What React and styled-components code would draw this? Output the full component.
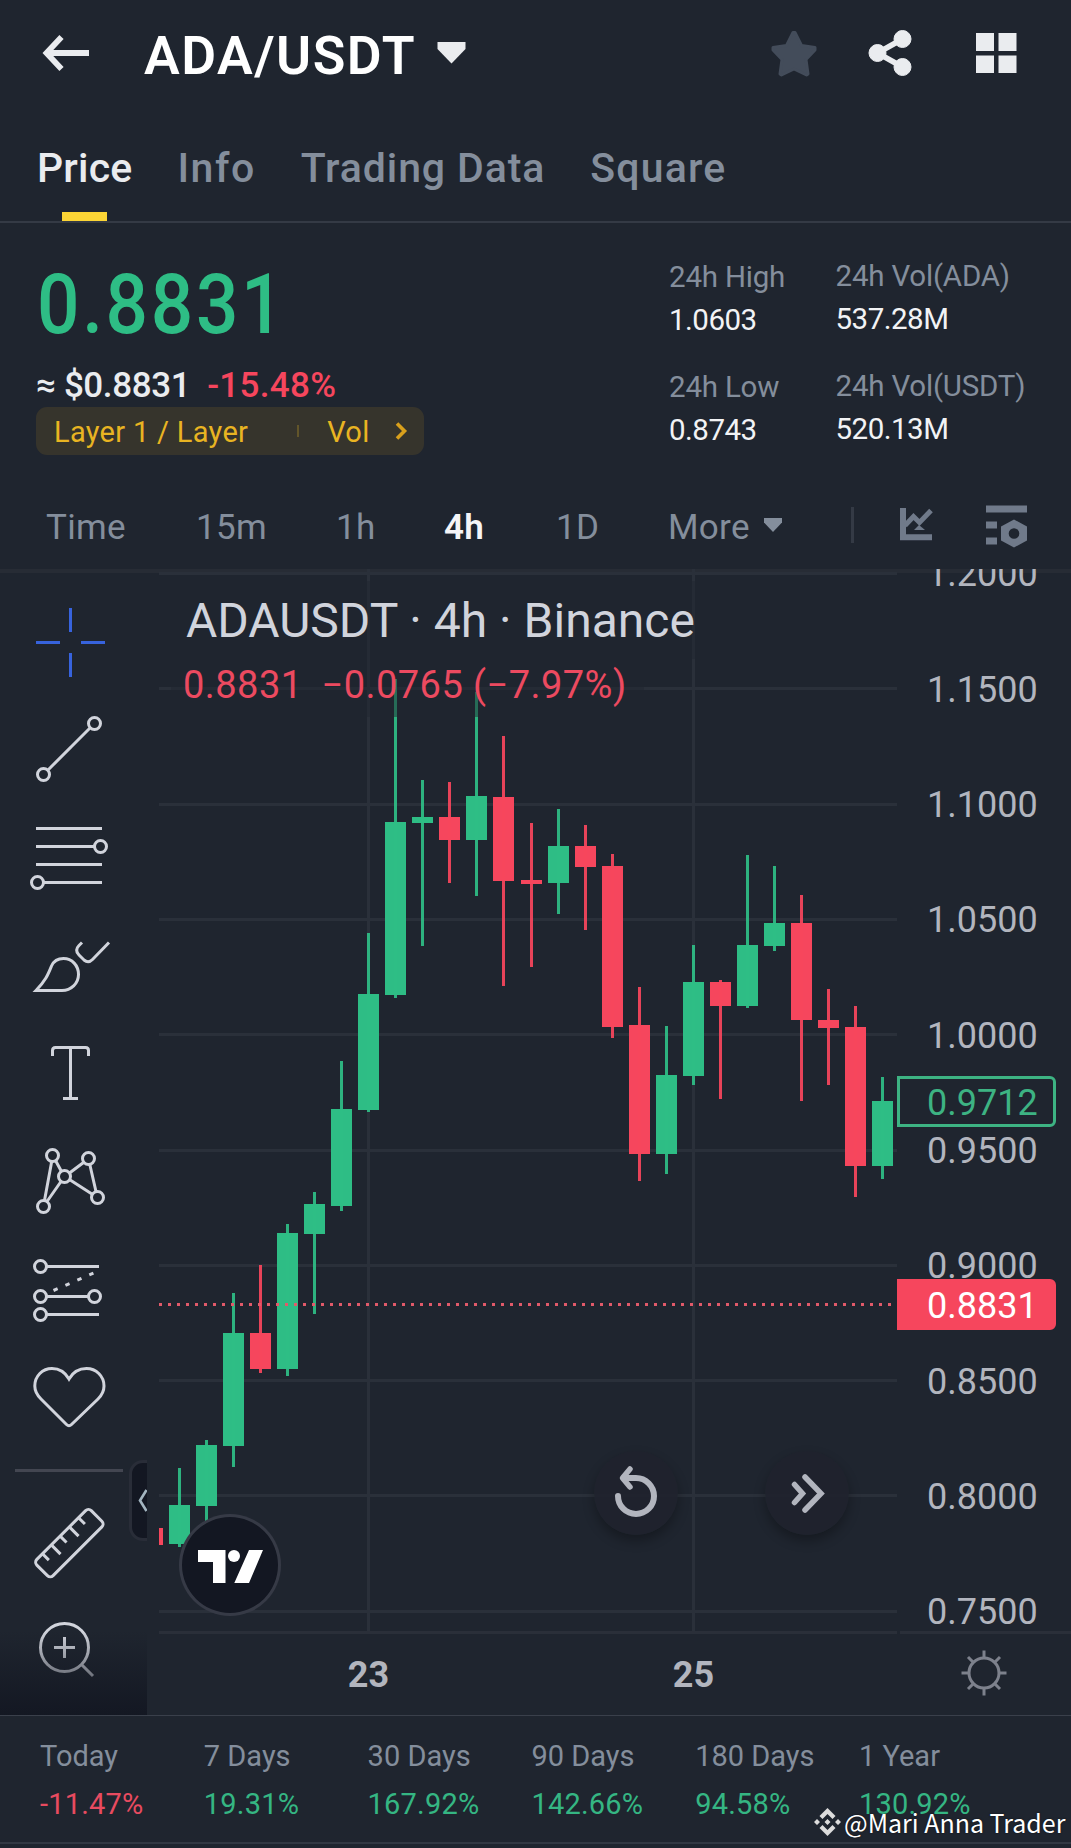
import React from 'react';
import styled, { createGlobalStyle } from 'styled-components';

const GlobalStyle = createGlobalStyle`
  * {
    box-sizing: border-box;
  }

  body {
    margin: 0;
    background: #1f252f;
    font-family: Roboto, "Liberation Sans", sans-serif;
  }

  svg {
    display: block;
    flex: none;
  }
`;

const UP = '#2ebd85';
const DOWN = '#f6465d';

const Screen = styled.div`
  position: relative;
  width: 1071px;
  height: 1848px;
  overflow: hidden;
  background: #1f252f;
  color: #eaecef;
`;

const Header = styled.header`
  display: flex;
  align-items: center;
  height: 110px;
  padding: 0 53px 4px 42px;
`;

const Pair = styled.h1`
  margin: 6px 0 0 54px;
  font-size: 53.5px;
  line-height: 64px;
  font-weight: 600;
  letter-spacing: 1.5px;
  color: #ffffff;
  white-space: nowrap;
`;

const PairCaret = styled.svg`
  margin: 0 auto 0 21px;
`;

const HeaderIcons = styled.div`
  display: flex;
  align-items: center;
  gap: 51px;
`;

const Tabs = styled.nav`
  display: flex;
  gap: 45px;
  height: 113px;
  padding-left: 37px;
  border-bottom: 2px solid #343a45;
`;

const Tab = styled.div`
  display: flex;
  flex-direction: column;
  align-items: center;
  padding-top: 35px;
  font-size: 41px;
  line-height: 47px;
  font-weight: 500;
  letter-spacing: ${(p) => p.$spacing}px;
  color: ${(p) => (p.$active ? '#eaecef' : '#848e9c')};

  &::after {
    content: '';
    width: 45px;
    height: 9px;
    margin: auto 0 0;
    background: ${(p) => (p.$active ? '#fcd535' : 'transparent')};
  }
`;

const Ticker = styled.section`
  display: flex;
  height: 261px;
`;

const PriceBlock = styled.div`
  width: 669px;
  padding: 32px 0 0 36px;
`;

const LastPrice = styled.div`
  width: max-content;
  margin-left: 1px;
  font-size: 83px;
  line-height: 100px;
  font-weight: 500;
  letter-spacing: 3px;
  color: ${UP};
  transform: scaleX(0.9);
  transform-origin: left;
`;

const FiatRow = styled.div`
  display: flex;
  gap: 17px;
  margin-top: 9px;
  font-size: 35px;
  line-height: 43px;
  font-weight: 500;
  letter-spacing: -0.4px;
`;

const Change = styled.span`
  color: ${DOWN};
  letter-spacing: 0.3px;
`;

const TagPill = styled.div`
  display: flex;
  align-items: center;
  width: 388px;
  height: 48px;
  padding-left: 18px;
  border-radius: 11px;
  background: #36342c;
  color: #e9b422;
  font-size: 29px;
  line-height: 36px;
  letter-spacing: 0.3px;

  span {
    padding-top: 2px;
  }
`;

const PillDivider = styled.i`
  width: 2px;
  height: 12px;
  margin: 0 28px 0 49px;
  background: #62552a;
`;

const StatColumn = styled.div`
  display: flex;
  flex-direction: column;
  gap: 27px;
  width: 166.5px;
  padding-top: ${(p) => p.$top}px;
  white-space: nowrap;
`;

const Stat = styled.div`
  display: flex;
  flex-direction: column;
  gap: 3px;
  font-size: 29.5px;
  line-height: 40px;
  letter-spacing: -0.2px;
`;

const StatLabel = styled.span`
  color: #848e9c;
`;

const StatValue = styled.span`
  color: #f2f3f5;
  letter-spacing: -0.5px;
`;

const Intervals = styled.div`
  display: flex;
  align-items: center;
  height: 85px;
  padding-left: 46px;
  font-size: 35px;
  color: #848e9c;
`;

const Interval = styled.span`
  width: ${(p) => p.$width}px;
  padding-top: 2px;
  font-weight: ${(p) => (p.$active ? 600 : 400)};
  letter-spacing: 0.3px;
  color: ${(p) => (p.$active ? '#f5f5f7' : '#848e9c')};
`;

const IntervalDivider = styled.i`
  width: 3px;
  height: 36px;
  margin: 0 46px 4px 69px;
  background: #343a45;
`;

const Workspace = styled.main`
  position: relative;
  display: flex;
  height: 1146px;
  background: linear-gradient(#272c35, #272c35) top / 100% 4px no-repeat;
`;

const Toolbar = styled.aside`
  position: relative;
  width: 147px;
  padding-top: 19px;
  overflow: hidden;

  &::after {
    content: '';
    position: absolute;
    left: 0;
    right: 0;
    bottom: 0;
    height: 84px;
    background: linear-gradient(rgba(19, 23, 34, 0), rgba(19, 23, 34, 0.95));
  }
`;

const ToolSvg = styled.svg`
  fill: none;
  stroke: ${(p) => p.$color || '#d1d4dc'};
  stroke-width: 3;
`;

const ToolDivider = styled.div`
  width: 108px;
  height: 3px;
  margin: 17px 0 18px 15px;
  background: #434651;
`;

const CollapseHandle = styled.div`
  position: absolute;
  top: 891px;
  right: -14px;
  width: 32px;
  height: 81px;
  padding: 26px 0 0 6px;
  border: 3px solid #292d38;
  border-radius: 14px;
  background: #131722;
`;

const ChartArea = styled.div`
  position: relative;
  flex: 1;
`;

const PlotRow = styled.div`
  display: flex;
  height: 1062px;
`;

const PriceAxis = styled.div`
  flex: 1;
  overflow: hidden;
  color: #b2b5be;
  font-size: 36px;
`;

const PriceLabel = styled.div`
  height: 115.35px;
  padding-left: 30px;
  line-height: 115.35px;

  &:first-child {
    margin-top: -51.7px;
  }
`;

const PriceTag = styled.div`
  position: absolute;
  left: 750px;
  top: ${(p) => p.$top}px;
  width: 159px;
  height: 51px;
  padding-left: 27px;
  border: 3px solid ${(p) => p.$border};
  border-radius: 0 6px 6px 0;
  background: ${(p) => p.$fill};
  color: ${(p) => p.$text};
  font-size: 36px;
  line-height: 48px;
`;

const LegendTitle = styled.div`
  position: absolute;
  left: 24px;
  top: 12px;
  height: 78px;
  padding: 0 8px 0 15px;
  background: rgba(31, 37, 47, 0.5);
  color: #d1d4dc;
  font-size: 48px;
  line-height: 80px;
  white-space: nowrap;
`;

const LegendValues = styled.div`
  position: absolute;
  left: 24px;
  top: 90px;
  display: flex;
  gap: 19px;
  height: 58px;
  padding: 0 17px 0 12px;
  background: rgba(31, 37, 47, 0.5);
  color: #ec4a60;
  font-size: 38px;
  line-height: 52px;
  letter-spacing: 0.45px;
  white-space: nowrap;
`;

const RoundButton = styled.button`
  position: absolute;
  left: ${(p) => p.$left}px;
  top: 882px;
  width: 84px;
  height: 84px;
  padding: 0;
  border: 0;
  border-radius: 50%;
  background: rgba(31, 34, 45, 0.93);
  box-shadow: 0 6px 12px rgba(0, 0, 0, 0.3);
`;

const TradingViewBadge = styled.div`
  position: absolute;
  left: 32px;
  top: 945px;
  width: 102px;
  height: 102px;
  border: 3px solid rgba(70, 74, 85, 0.7);
  border-radius: 50%;
  background: #131722;
`;

const TimeRow = styled.div`
  display: flex;
  gap: 3px;
  height: 84px;
  padding-left: 12px;
`;

const TimeAxis = styled.div`
  display: flex;
  width: 738px;
  padding-left: 47px;
  border-top: 3px solid #2a2f39;
`;

const TimeLabel = styled.span`
  width: 325px;
  text-align: center;
  font-size: 36px;
  line-height: 83px;
  font-weight: 700;
  color: #b2b5be;
`;

const AxisCorner = styled.div`
  flex: 1;
  padding: 16px 0 0 61px;
  border-top: 3px solid #2a2f39;
`;

const Periods = styled.section`
  display: grid;
  grid-template-columns: repeat(6, 163.8px);
  height: 129px;
  padding: 20px 0 0 40px;
  border-top: 1px solid #3a404b;
  border-bottom: 2px solid #323843;
  font-size: 29px;
  line-height: 40px;
  white-space: nowrap;
`;

const PeriodName = styled.div`
  color: #848e9c;
`;

const PeriodChange = styled.div`
  margin-top: 8px;
  letter-spacing: 0.2px;
  color: ${(p) => (p.$down ? '#e84b60' : '#35b683')};
`;

const Watermark = styled.div`
  position: absolute;
  left: 814px;
  bottom: 6px;
  display: flex;
  align-items: center;
  gap: 3px;
  color: #ffffff;
  font-family: "Noto Sans CJK SC", sans-serif;
  font-size: 25px;
  line-height: 40px;
  white-space: nowrap;
  text-shadow: 0 0 2px rgba(0, 0, 0, 0.6);
`;

const GRID_Y = [573, 688, 804, 919, 1034, 1150, 1265, 1380, 1495, 1611];
const PRICES = ['1.2000', '1.1500', '1.1000', '1.0500', '1.0000', '0.9500', '0.9000', '0.8500', '0.8000', '0.7500'];

// [left, body top, body bottom, wick top, wick bottom, rising]
const CANDLES = [
    [169, 1505, 1544, 1468, 1547, 1],
    [196, 1445, 1506, 1440, 1523, 1],
    [223, 1333, 1446, 1293, 1467, 1],
    [250, 1333, 1369, 1265, 1373, 0],
    [277, 1233, 1369, 1224, 1376, 1],
    [304, 1204, 1234, 1192, 1314, 1],
    [331, 1109, 1206, 1061, 1211, 1],
    [358, 994, 1110, 933, 1112, 1],
    [385, 822, 995, 679, 998, 1],
    [412, 817, 823, 780, 946, 1],
    [439, 817, 840, 782, 883, 0],
    [466, 796, 840, 692, 896, 1],
    [493, 797, 881, 736, 986, 0],
    [521, 880, 884, 823, 967, 0],
    [548, 846, 883, 809, 914, 1],
    [575, 846, 867, 825, 930, 0],
    [602, 866, 1027, 854, 1038, 0],
    [629, 1025, 1154, 987, 1181, 0],
    [656, 1075, 1154, 1026, 1174, 1],
    [683, 982, 1076, 945, 1085, 1],
    [710, 982, 1006, 980, 1099, 0],
    [737, 945, 1006, 855, 1008, 1],
    [764, 923, 946, 866, 951, 1],
    [791, 923, 1020, 895, 1101, 0],
    [818, 1020, 1028, 989, 1085, 0],
    [845, 1027, 1166, 1006, 1197, 0],
    [872, 1101, 1166, 1077, 1179, 1],
];

const PERIODS = [
    ['Today', '-11.47%'],
    ['7 Days', '19.31%'],
    ['30 Days', '167.92%'],
    ['90 Days', '142.66%'],
    ['180 Days', '94.58%'],
    ['1 Year', '130.92%'],
];

const Tool = ({ color, children }) => (
    <ToolSvg width="147" height="108" viewBox="0 0 147 108" $color={color}>{children}</ToolSvg>
);

const DrawingTools = () => (
    <Toolbar>
        <Tool color="#3763dd">
            <path d="M70.5 20v24M70.5 65v24M36 54.5h24M81 54.5h24" />
        </Tool>
        <Tool>
            <circle cx="43.5" cy="78.5" r="6" />
            <circle cx="94.5" cy="27.5" r="6" />
            <path d="M48 74L90 32" />
        </Tool>
        <Tool>
            <path d="M36 24.5h66M36 42.5h58M36 60.5h66M44 78.5h58" />
            <circle cx="100.5" cy="42.5" r="6" />
            <circle cx="37.5" cy="78.5" r="6" />
        </Tool>
        <Tool>
            <path d="M36 78.5H62C71 78.5 78.5 71.5 78.5 62.5C78.5 53.5 72 46.5 63.5 46.5C57.5 46.5 53.5 49.5 51.5 54C48 62.5 46 68 36 78.5Z" />
            <path d="M82 30.5L79 33.5C76 36.5 76 40 79 43L84 48C87 50.5 89.5 50.5 92.5 47.5L109 30.5" />
        </Tool>
        <Tool>
            <path d="M52.5 36V30.5Q52.5 27.5 55.5 27.5H85.5Q88.5 27.5 88.5 30.5V36M70.5 27.5V78.5M63 78.5H78" />
        </Tool>
        <Tool>
            <circle cx="52.5" cy="27.5" r="6" />
            <circle cx="88.5" cy="30.5" r="6" />
            <circle cx="64.5" cy="48.5" r="6" />
            <circle cx="97.5" cy="69.5" r="6" />
            <circle cx="43.5" cy="78.5" r="6" />
            <path d="M51.7 33.5L44.5 72.5M55.5 32.5L61.5 43.5M69.5 45L83.5 34.5M89.8 36.5L96 63.5M69.8 51.8L92.3 66.2M61 53.5L47 73.5" />
        </Tool>
        <Tool>
            <circle cx="40.5" cy="30.5" r="6" />
            <circle cx="40.5" cy="60.5" r="6" />
            <circle cx="94.5" cy="60.5" r="6" />
            <circle cx="40.5" cy="78.5" r="6" />
            <path d="M47 30.5H99M47 60.5H88M47 78.5H99" />
            <path d="M53.5 54.5L95 36.5" strokeDasharray="4.5 8.5" />
        </Tool>
        <Tool>
            <path d="M69 35C65 28 59 24.5 52 24.5C42.5 24.5 34.8 32 34.8 42C34.8 47 37 51 41 55L66.5 80.5Q69 83 71.5 80.5L98 55C102 51 104 47 104 42C104 32 96 24.5 86.5 24.5C79 24.5 73 28 69 35Z" />
        </Tool>
        <ToolDivider />
        <Tool>
            <g transform="rotate(-45 69 53.5)">
                <rect x="31" y="42" width="77" height="23" rx="4" />
                <path d="M43 42v9M55.5 42v13M68 42v9M81 42v13M94 42v9" />
            </g>
        </Tool>
        <Tool>
            <circle cx="64.5" cy="49.5" r="24" />
            <path d="M64.5 39V60M54 49.5H75M82 67L93 78" />
        </Tool>
        <CollapseHandle>
            <svg width="12" height="23" fill="none" stroke="#a3b5c0" strokeWidth="2.6">
                <path d="M8.5 1L2 11.5L8.5 22" />
            </svg>
        </CollapseHandle>
    </Toolbar>
);

const Plot = () => (
    <svg width="750" height="1062" viewBox="147 569 750 1062">
        <g fill="#2a303a">
            {GRID_Y.map((y) => (
                <rect key={y} x="159" y={y - 1} width="738" height="3" />
            ))}
            <rect x="367" y="569" width="3" height="1062" />
            <rect x="692" y="569" width="3" height="1062" />
        </g>
        <rect x="159" y="1528" width="4" height="17" fill={DOWN} />
        {CANDLES.map(([x, top, bottom, high, low, rising]) => (
            <g key={x} fill={rising ? UP : DOWN}>
                <rect x={x} y={top} width="21" height={bottom - top} />
                <rect x={x + 9} y={high} width="3" height={low - high} opacity="0.93" />
            </g>
        ))}
        <path d="M159 1304.5H895" stroke="#e25a6a" strokeWidth="3" strokeDasharray="3 6" />
    </svg>
);

const App = () => (
    <>
        <GlobalStyle />
        <Screen>
            <Header>
                <svg width="48" height="40" fill="none" stroke="#eaecef" strokeWidth="5.8">
                    <path d="M47 20H6M19.5 4L4.5 20L19.5 36" />
                </svg>
                <Pair>ADA/USDT</Pair>
                <PairCaret width="29" height="22" fill="#eaecef">
                    <path d="M0.5 0H28.5V7L14.5 21.5L0.5 7Z" />
                </PairCaret>
                <HeaderIcons>
                    <svg width="46" height="47" viewBox="0 0 46 47" fill="#434c5a" stroke="#434c5a" strokeWidth="3" strokeLinejoin="round">
                        <path d="M22 2.5H24L30.5 15.5L44 17.5V20L35 29.5L37 44L35.5 45L23 39L10.5 45L9 44L11 29.5L2 20V17.5L15.5 15.5Z" />
                    </svg>
                    <svg width="45" height="48" fill="#eaecef" stroke="#eaecef">
                        <circle cx="9.5" cy="24" r="8.5" />
                        <circle cx="34.5" cy="10" r="8.5" />
                        <circle cx="34.5" cy="38" r="8.5" />
                        <path d="M34.5 10L9.5 24L34.5 38" fill="none" strokeWidth="5.5" />
                    </svg>
                    <svg width="54" height="40" fill="#eaecef">
                        <path d="M12 0h18v18h-18zM34.5 0h18v18h-18zM12 22.5h18v17.5h-18zM34.5 22.5h18v17.5h-18z" />
                    </svg>
                </HeaderIcons>
            </Header>

            <Tabs>
                <Tab $active $spacing={0.2}>Price</Tab>
                <Tab $spacing={1.5}>Info</Tab>
                <Tab $spacing={0.9}>Trading Data</Tab>
                <Tab $spacing={1.2}>Square</Tab>
            </Tabs>

            <Ticker>
                <PriceBlock>
                    <LastPrice>0.8831</LastPrice>
                    <FiatRow>
                        <span>≈ $0.8831</span>
                        <Change>-15.48%</Change>
                    </FiatRow>
                    <TagPill>
                        <span>Layer 1 / Layer</span>
                        <PillDivider />
                        <span>Vol</span>
                        <svg width="40" height="20" fill="none" stroke="#d9a01c" strokeWidth="3.6">
                            <path d="M27 2.5L34.5 10L27 17.5" />
                        </svg>
                    </TagPill>
                </PriceBlock>
                <StatColumn $top={34}>
                    <Stat>
                        <StatLabel>24h High</StatLabel>
                        <StatValue>1.0603</StatValue>
                    </Stat>
                    <Stat>
                        <StatLabel>24h Low</StatLabel>
                        <StatValue>0.8743</StatValue>
                    </Stat>
                </StatColumn>
                <StatColumn $top={32.5}>
                    <Stat>
                        <StatLabel>24h Vol(ADA)</StatLabel>
                        <StatValue>537.28M</StatValue>
                    </Stat>
                    <Stat>
                        <StatLabel>24h Vol(USDT)</StatLabel>
                        <StatValue>520.13M</StatValue>
                    </Stat>
                </StatColumn>
            </Ticker>

            <Intervals>
                <Interval $width={150}>Time</Interval>
                <Interval $width={140}>15m</Interval>
                <Interval $width={108}>1h</Interval>
                <Interval $width={112} $active>4h</Interval>
                <Interval $width={112}>1D</Interval>
                <Interval $width={96}>More</Interval>
                <svg width="18" height="18" viewBox="0 0 18 18" fill="#848e9c">
                    <path d="M0 0H18V4.5L9 14L0 4.5Z" />
                </svg>
                <IntervalDivider />
                <svg width="33" height="37" fill="none" stroke="#707a8a" strokeWidth="5.5">
                    <path d="M3 0V29.2H32" strokeWidth="6" />
                    <path d="M5 17.5L13.5 8.5L19.5 14.5L31 2.5" strokeWidth="5" />
                    <path d="M14 22L19 17L25 22Z" fill="#707a8a" stroke="none" />
                </svg>
                <svg width="94" height="44" viewBox="-53 0 94 44" fill="#707a8a">
                    <path d="M0 0.5H41V7.500H0ZM0 16.5H11V23.5H0ZM0 32.5H11V39.5H0Z" />
                    <path fillRule="evenodd" d="M28 14.5L41 21.5V35.5L28 42.5L15 35.5V21.5ZM28 23.2A5.3 5.3 0 1 0 28 33.8A5.3 5.3 0 1 0 28 23.2Z" />
                </svg>
            </Intervals>

            <Workspace>
                <DrawingTools />
                <ChartArea>
                    <PlotRow>
                        <Plot />
                        <PriceAxis>
                            {PRICES.map((price) => (
                                <PriceLabel key={price}>{price}</PriceLabel>
                            ))}
                        </PriceAxis>
                    </PlotRow>
                    <TimeRow>
                        <TimeAxis>
                            <TimeLabel>23</TimeLabel>
                            <TimeLabel>25</TimeLabel>
                        </TimeAxis>
                        <AxisCorner>
                            <svg width="46" height="46" fill="none" stroke="#7d818c" strokeWidth="3">
                                <circle cx="23" cy="23" r="15" />
                                <path d="M23 0.5V7M23 39V45.5M0.5 23H7M39 23H45.5M7 7L12 12M34 34L39 39M7 39L12 34M34 12L39 7" />
                            </svg>
                        </AxisCorner>
                    </TimeRow>

                    <LegendTitle>ADAUSDT · 4h · Binance</LegendTitle>
                    <LegendValues>
                        <span>0.8831</span>
                        <span>−0.0765 (−7.97%)</span>
                    </LegendValues>
                    <PriceTag $top={507} $border="#3db383" $fill="#1f252f" $text="#3db383">0.9712</PriceTag>
                    <PriceTag $top={710} $border={DOWN} $fill={DOWN} $text="#ffffff">0.8831</PriceTag>
                    <RoundButton $left={447}>
                        <svg width="84" height="84" fill="none" stroke="#b2b5be" strokeWidth="6" strokeLinecap="round" strokeLinejoin="round">
                            <path d="M24 45A18 18 0 1 0 42 27H30" />
                            <path d="M36 18L28.5 27L36 36" strokeWidth="5.5" />
                        </svg>
                    </RoundButton>
                    <RoundButton $left={618}>
                        <svg width="84" height="84" fill="none" stroke="#b2b5be" strokeWidth="5.5" strokeLinecap="round">
                            <path d="M29.5 33.5L37.5 42.5L29.5 51.5M40 26L56 42.5L40 59" />
                        </svg>
                    </RoundButton>
                    <TradingViewBadge>
                        <svg width="96" height="96" fill="#ffffff">
                            <path d="M16 33H43.5V66H31V45H16ZM67 33H81L67 66H52.3Z" />
                            <circle cx="52" cy="39" r="6" />
                        </svg>
                    </TradingViewBadge>
                </ChartArea>
            </Workspace>

            <Periods>
                {PERIODS.map(([name, change]) => (
                    <div key={name}>
                        <PeriodName>{name}</PeriodName>
                        <PeriodChange $down={change.startsWith('-')}>{change}</PeriodChange>
                    </div>
                ))}
            </Periods>

            <Watermark>
                <svg width="27" height="28" viewBox="0 0 27 28" fill="#dcdcdc">
                    <path d="M13.5 0L21.5 8L18.5 11L13.5 6L8.5 11L5.5 8ZM13.5 28L21.5 20L18.5 17L13.5 22L8.5 17L5.5 20ZM3 11L6 14L3 17L0 14ZM24 11L27 14L24 17L21 14ZM13.5 11L16.5 14L13.5 17L10.5 14Z" />
                </svg>
                <span>@Mari Anna Trader</span>
            </Watermark>
        </Screen>
    </>
);

export default App;
